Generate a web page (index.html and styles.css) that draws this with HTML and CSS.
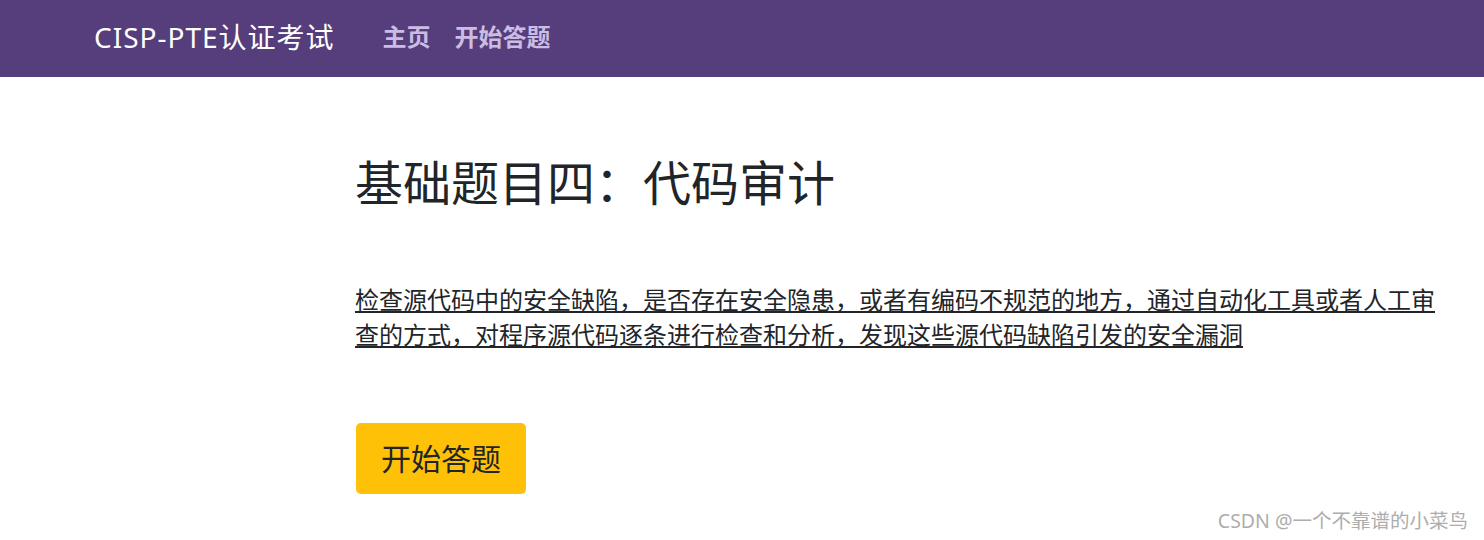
FILE: index.html
```html
<!DOCTYPE html>
<html lang="zh-CN">
<head>
<meta charset="UTF-8">
<meta name="viewport" content="width=device-width, initial-scale=1.0">
<title>CISP-PTE认证考试</title>
<link rel="stylesheet" href="styles.css">
</head>
<body>
<nav class="navbar">
  <a class="brand" href="#">CISP-PTE认证考试</a>
  <ul class="nav-links">
    <li><a href="#">主页</a></li>
    <li><a href="#">开始答题</a></li>
  </ul>
</nav>
<main class="content">
  <h1 class="title">基础题目四：代码审计</h1>
  <p class="intro"><a href="#">检查源代码中的安全缺陷，是否存在安全隐患，或者有编码不规范的地方，通过自动化工具或者人工审查的方式，对程序源代码逐条进行检查和分析，发现这些源代码缺陷引发的安全漏洞</a></p>
  <button class="btn-start">开始答题</button>
</main>
<div class="watermark">CSDN @一个不靠谱的小菜鸟</div>
</body>
</html>
```

FILE: styles.css
```css
body {
  margin: 0;
  font-family: "Noto Sans", "Noto Sans CJK SC", sans-serif;
  color: #212529;
  background: #fff;
  overflow: hidden;
}
.navbar {
  height: 77px;
  background: #563d7c;
  display: flex;
  align-items: center;
  padding-left: 94px;
  padding-bottom: 3px;
  box-sizing: border-box;
}
.brand {
  color: #fff;
  font-size: 28px;
  text-decoration: none;
  line-height: 1;
  letter-spacing: 1px;
  margin-right: 36px;
}
.nav-links {
  display: flex;
  list-style: none;
  margin: 0;
  padding: 0;
}
.nav-links a {
  display: block;
  padding: 0 12px;
  color: #cbbce3;
  font-size: 24px;
  font-weight: bold;
  text-decoration: none;
  line-height: 1;
}
.content {
  padding-left: 355px;
  width: 1090px;
}
.title {
  margin: 77px 0 0;
  font-size: 48px;
  font-weight: normal;
  line-height: 57px;
}
.intro {
  margin: 70px 0 0;
  font-family: "Noto Sans CJK SC", sans-serif;
  font-size: 24px;
  line-height: 35px;
}
.intro a {
  color: #212529;
  text-decoration: underline;
}
.btn-start {
  margin-top: 72px;
  margin-left: 1px;
  padding: 13px 25px;
  width: 170px;
  height: 71px;
  font-family: inherit;
  font-size: 30px;
  line-height: 45px;
  color: #212529;
  background: #ffc107;
  border: none;
  border-radius: 5px;
  cursor: pointer;
}
.watermark {
  position: absolute;
  right: 16px;
  bottom: 6px;
  font-size: 19.5px;
  color: #adadad;
}
```
